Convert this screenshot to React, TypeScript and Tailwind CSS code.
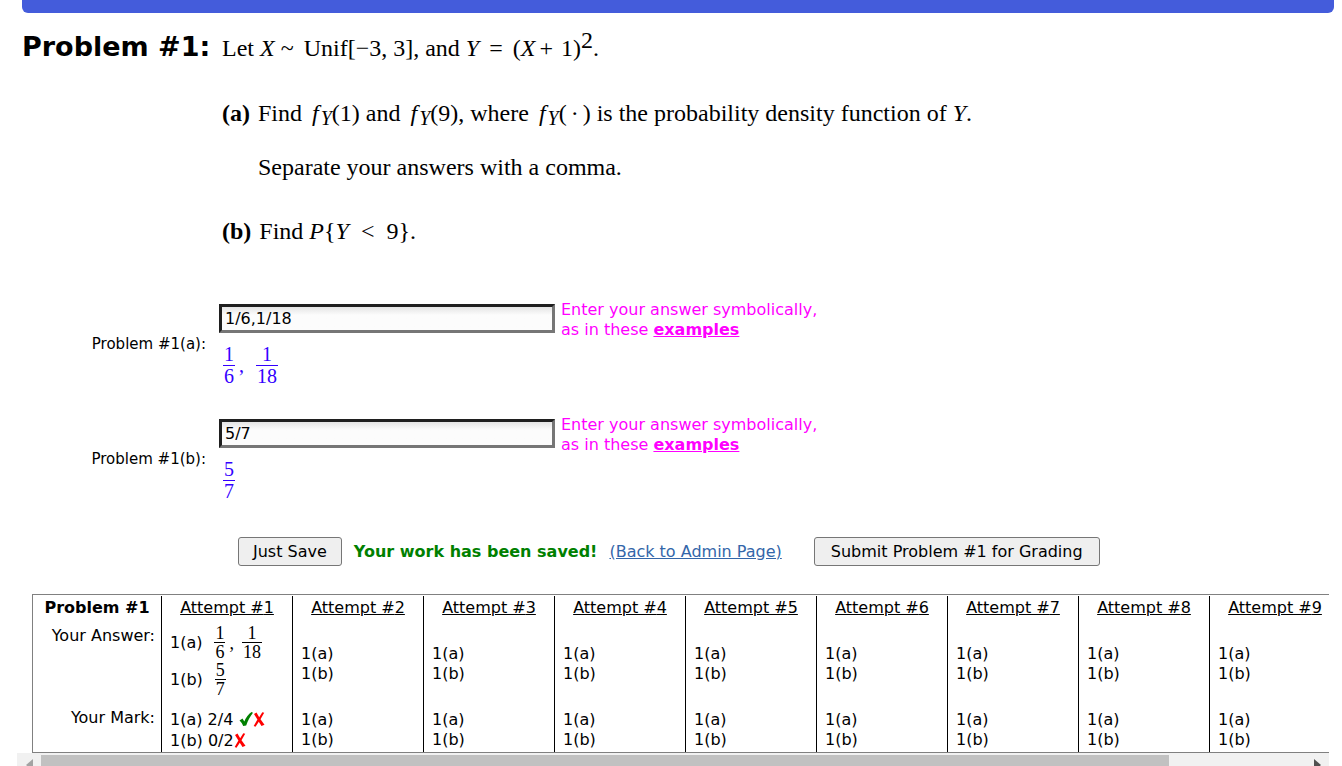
import type { ReactNode } from "react";

const attempts = [1, 2, 3, 4, 5, 6, 7, 8, 9];

function Fraction({ top, bottom }: { top: string; bottom: string }) {
  return (
    <span className="inline-flex flex-col items-center align-middle font-['Liberation_Serif',serif]">
      <span>{top}</span>
      <span className="border-t border-current px-px">{bottom}</span>
    </span>
  );
}

function Density({ children }: { children: ReactNode }) {
  return (
    <span className="ml-1">
      <i>f</i>
      <sub className="bottom-0 top-1 ml-0.5 text-xl leading-none"><i>Y</i></sub>
      ({children})
    </span>
  );
}

function Check() {
  return (
    <svg className="ml-1.5 inline h-4 w-3.5 align-[-2px]" viewBox="0 0 14 16" aria-label="correct">
      <path d="M0.500 9.500 3.500 7.500 5.300 10.500C7 6.500 9.500 3 12.500 1L14 1.800C11 5.500 8.800 9.800 7.200 14.500L4.200 15C3.400 12.800 2.200 11 0.500 9.500Z" fill="#008000" />
    </svg>
  );
}

function Cross() {
  return (
    <svg className="inline h-4 w-3 align-[-2px]" viewBox="0 0 12 16" aria-label="incorrect">
      <path d="M1 3 3.500 1.500 6.200 6.200 9.300 1.200 11.200 1.700 7.500 8.300 11.500 13.800 8.500 15 5.800 10.700 2.500 15.700 0.700 14.900 4.400 8.600Z" fill="#f00" />
    </svg>
  );
}

function AnswerRow({ part, value, children }: { part: string; value: string; children: ReactNode }) {
  const id = `answer-${part}`;
  return (
    <div className="grid h-[88px] grid-cols-[184px_1fr] items-center gap-x-[13px]">
      <label htmlFor={id} className="text-right text-[15px]">Problem #1({part}):</label>
      <div className="flex flex-col gap-1 self-start">
        <div className="flex items-start gap-1.5">
          <input
            id={id}
            defaultValue={value}
            className="mt-1 h-[29px] w-[336px] border-3 border-b-[#767676] border-l-[#1f1f1f] border-r-[#767676] border-t-[#1f1f1f] bg-linear-to-b from-[#e4e4e4] via-[#fcfcfc] via-35% to-[#fcfcfc] px-[3px] text-base"
          />
          <p className="leading-5 text-[#f0f]">
            Enter your answer symbolically,<br />
            as in these <a href="#examples" className="font-bold underline">examples</a>
          </p>
        </div>
        <div className="flex items-center px-1 text-xl leading-[21px] text-[#30f]">{children}</div>
      </div>
    </div>
  );
}

export default function App() {
  return (
    <div className="h-screen overflow-hidden bg-white font-['DejaVu_Sans',Verdana,sans-serif] text-base text-black">
      <div className="ml-[22px] mr-2 h-[13px] rounded-b-md bg-[#445cdb]" />

      <section className="ml-[22px] grid grid-cols-[200px_1fr] items-baseline pt-[18px]">
        <h1 className="whitespace-nowrap text-[27px] font-bold leading-8">Problem #1:</h1>
        <div className="font-['Liberation_Serif',serif] text-2xl leading-8">
          <p>
            Let <i>X</i> <span className="mr-1">~</span> Unif[−3, 3], and <i>Y</i>
            <span className="mx-2.5">=</span>(<i>X</i>
            <span className="ml-1 mr-2">+</span>1)
            <sup className="-top-2 text-2xl leading-none">2</sup>.
          </p>
          <div className="mt-[33px] flex gap-2">
            <b>(a)</b>
            <div>
              <p>
                Find <Density>1</Density> and <Density>9</Density>, where{" "}
                <Density><span className="mx-1">·</span></Density> is the probability density function of <i>Y</i>.
              </p>
              <p className="mt-[22px]">Separate your answers with a comma.</p>
            </div>
          </div>
          <div className="mt-8 flex gap-2">
            <b>(b)</b>
            <p>Find <i>P</i>{"{"}<i>Y</i>&nbsp; &lt;&nbsp; 9{"}"}.</p>
          </div>
        </div>
      </section>

      <form className="ml-[22px] mt-[53px]" onSubmit={(e) => e.preventDefault()}>
        <div className="flex flex-col gap-[27px]">
          <AnswerRow part="a" value="1/6,1/18">
            <Fraction top="1" bottom="6" />
            <span className="ml-1 mr-3 font-['Liberation_Serif',serif]">,</span>
            <Fraction top="1" bottom="18" />
          </AnswerRow>
          <AnswerRow part="b" value="5/7">
            <Fraction top="5" bottom="7" />
          </AnswerRow>
        </div>
        <div className="ml-[216px] mt-[34px] flex items-center whitespace-nowrap">
          <button className="h-[29px] rounded-[3px] border border-[#767676] bg-[#efefef] px-3.5">Just Save</button>
          <b className="ml-3 text-[#008000]">Your work has been saved!</b>
          <a href="#admin" className="ml-3 text-[#3366a9] underline">(Back to Admin Page)</a>
          <button className="ml-8 h-[29px] rounded-[3px] border border-[#767676] bg-[#efefef] px-4">Submit Problem #1 for Grading</button>
        </div>
      </form>

      <div className="ml-[17px] mr-[13px] mt-7">
        <div className="overflow-hidden pl-[15px]">
          <table className="w-[1442px] table-fixed border-separate border-spacing-0 border border-[#808080] pt-px leading-5">
            <thead>
              <tr className="h-6">
                <th className="w-32 whitespace-nowrap font-bold">Problem #1</th>
                {attempts.map((n) => (
                  <th key={n} className="w-[131px] whitespace-nowrap border-l border-black font-normal underline">Attempt #{n}</th>
                ))}
                <th className="border-l border-black" />
              </tr>
            </thead>
            <tbody>
              <tr className="h-[88px]">
                <th className="whitespace-nowrap pr-1.5 pt-1.5 text-right align-top font-normal">Your Answer:</th>
                {attempts.map((n) => (
                  <td key={n} className="border-l border-black pl-2">
                    {n === 1 ? (
                      <div className="pb-1.5">
                        <div className="flex items-center">
                          1(a)
                          <span className="ml-3 flex items-center text-lg leading-[18px]">
                            <Fraction top="1" bottom="6" />
                            <span className="ml-1 mr-2 font-['Liberation_Serif',serif]">,</span>
                            <Fraction top="1" bottom="18" />
                          </span>
                        </div>
                        <div className="flex items-center">
                          1(b)
                          <span className="ml-3 flex text-lg leading-[18px]"><Fraction top="5" bottom="7" /></span>
                        </div>
                      </div>
                    ) : (
                      <>1(a)<br />1(b)</>
                    )}
                  </td>
                ))}
                <td className="border-l border-black" />
              </tr>
              <tr className="h-11">
                <th className="whitespace-nowrap pr-1.5 text-right align-top font-normal">Your Mark:</th>
                {attempts.map((n) => (
                  <td key={n} className="whitespace-nowrap border-l border-black pl-2">
                    {n === 1 ? (
                      <div className="leading-[21px]">1(a) 2/4<Check /><Cross /><br />1(b) 0/2<Cross /></div>
                    ) : (
                      <>1(a)<br />1(b)</>
                    )}
                  </td>
                ))}
                <td className="border-l border-black" />
              </tr>
            </tbody>
          </table>
        </div>
        {/* horizontal scrollbar of the attempts table */}
        <div className="flex h-6 items-center justify-between bg-[#f1f1f1] px-2">
          <svg className="h-3 w-2" viewBox="0 0 8 12"><path d="M8 0v12L1 6Z" fill="#a3a3a3" /></svg>
          <div className="ml-2 mr-auto h-5 w-[87%] bg-[#c1c1c1]" />
          <svg className="h-3 w-2" viewBox="0 0 8 12"><path d="M1 0v12L8 6Z" fill="#505050" /></svg>
        </div>
      </div>
    </div>
  );
}
